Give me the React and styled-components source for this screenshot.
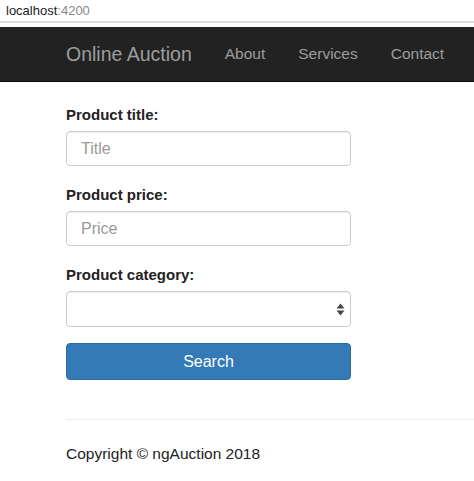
import React from 'react';
import styled, { createGlobalStyle } from 'styled-components';

const GlobalStyle = createGlobalStyle`
  * { box-sizing: border-box; }
  body {
    margin: 0;
    background: #fff;
    font-family: "Liberation Sans", Arial, Helvetica, sans-serif;
    color: #333;
  }
`;

const AddressBar = styled.div`
  height: 23px;
  padding: 2px 0 0 6px;
  font-size: 13px;
  line-height: 17px;
  color: #1a1a1a;
  border-bottom: 2px solid #dcdcdc;
`;

const Port = styled.span`
  color: #888;
`;

const Navbar = styled.nav`
  margin-top: 4px;
  height: 55px;
  background-color: #222;
  border-bottom: 1px solid #080808;
  display: flex;
  align-items: center;
  padding-left: 66px;
  gap: 33px;
`;

const Brand = styled.a`
  font-size: 19.5px;
  color: #9d9d9d;
  text-decoration: none;
`;

const NavLink = styled.a`
  font-size: 15.5px;
  color: #9d9d9d;
  text-decoration: none;
`;

const Main = styled.main`
  padding: 22px 0 0 66px;
`;

const Form = styled.form`
  width: 285px;
`;

const Group = styled.div`
  margin-bottom: ${(p) => p.$gap || 18}px;
`;

const Label = styled.label`
  display: block;
  font-size: 15px;
  font-weight: bold;
  line-height: 21px;
  margin-bottom: 6px;
  color: #222;
`;

const Input = styled.input`
  display: block;
  width: 100%;
  height: 35px;
  padding: 0 14px;
  font-family: inherit;
  font-size: 16px;
  color: #555;
  border: 1px solid #ccc;
  border-radius: 4px;
  box-shadow: inset 0 1px 1px rgba(0, 0, 0, 0.075);
  outline: none;

  &::placeholder {
    color: #999;
  }
`;

const SelectBox = styled.div`
  position: relative;
  height: 36px;
  border: 1px solid #ccc;
  border-radius: 4px;
  box-shadow: inset 0 1px 1px rgba(0, 0, 0, 0.075);
  background: #fff;
`;

const Arrows = styled.svg`
  position: absolute;
  right: 5px;
  top: 11px;
`;

const Button = styled.button`
  display: block;
  width: 100%;
  height: 37px;
  background-color: #337ab7;
  border: 1px solid #2e6da4;
  border-radius: 4px;
  color: #fff;
  font-family: inherit;
  font-size: 16px;
`;

const Rule = styled.hr`
  margin: 39px 0 0;
  border: 0;
  border-top: 1px solid #eee;
`;

const Footer = styled.footer`
  padding-top: 24px;
  font-size: 15.5px;
  line-height: 20px;
  color: #222;
`;

const App = () => (
  <>
    <GlobalStyle />
    <AddressBar>
      localhost<Port>:4200</Port>
    </AddressBar>
    <Navbar>
      <Brand href="#">Online Auction</Brand>
      <NavLink href="#">About</NavLink>
      <NavLink href="#">Services</NavLink>
      <NavLink href="#">Contact</NavLink>
    </Navbar>
    <Main>
      <Form onSubmit={(e) => e.preventDefault()}>
        <Group>
          <Label>Product title:</Label>
          <Input placeholder="Title" />
        </Group>
        <Group>
          <Label>Product price:</Label>
          <Input placeholder="Price" />
        </Group>
        <Group $gap={16}>
          <Label>Product category:</Label>
          <SelectBox>
            <Arrows width="9" height="13" viewBox="0 0 9 13">
              <path d="M4.5 0.5 L8.5 5.5 L0.5 5.5 Z" fill="#444" />
              <path d="M4.5 12.5 L8.5 7.5 L0.5 7.5 Z" fill="#444" />
            </Arrows>
          </SelectBox>
        </Group>
        <Button type="submit">Search</Button>
      </Form>
      <Rule />
      <Footer>Copyright © ngAuction 2018</Footer>
    </Main>
  </>
);

export default App;
